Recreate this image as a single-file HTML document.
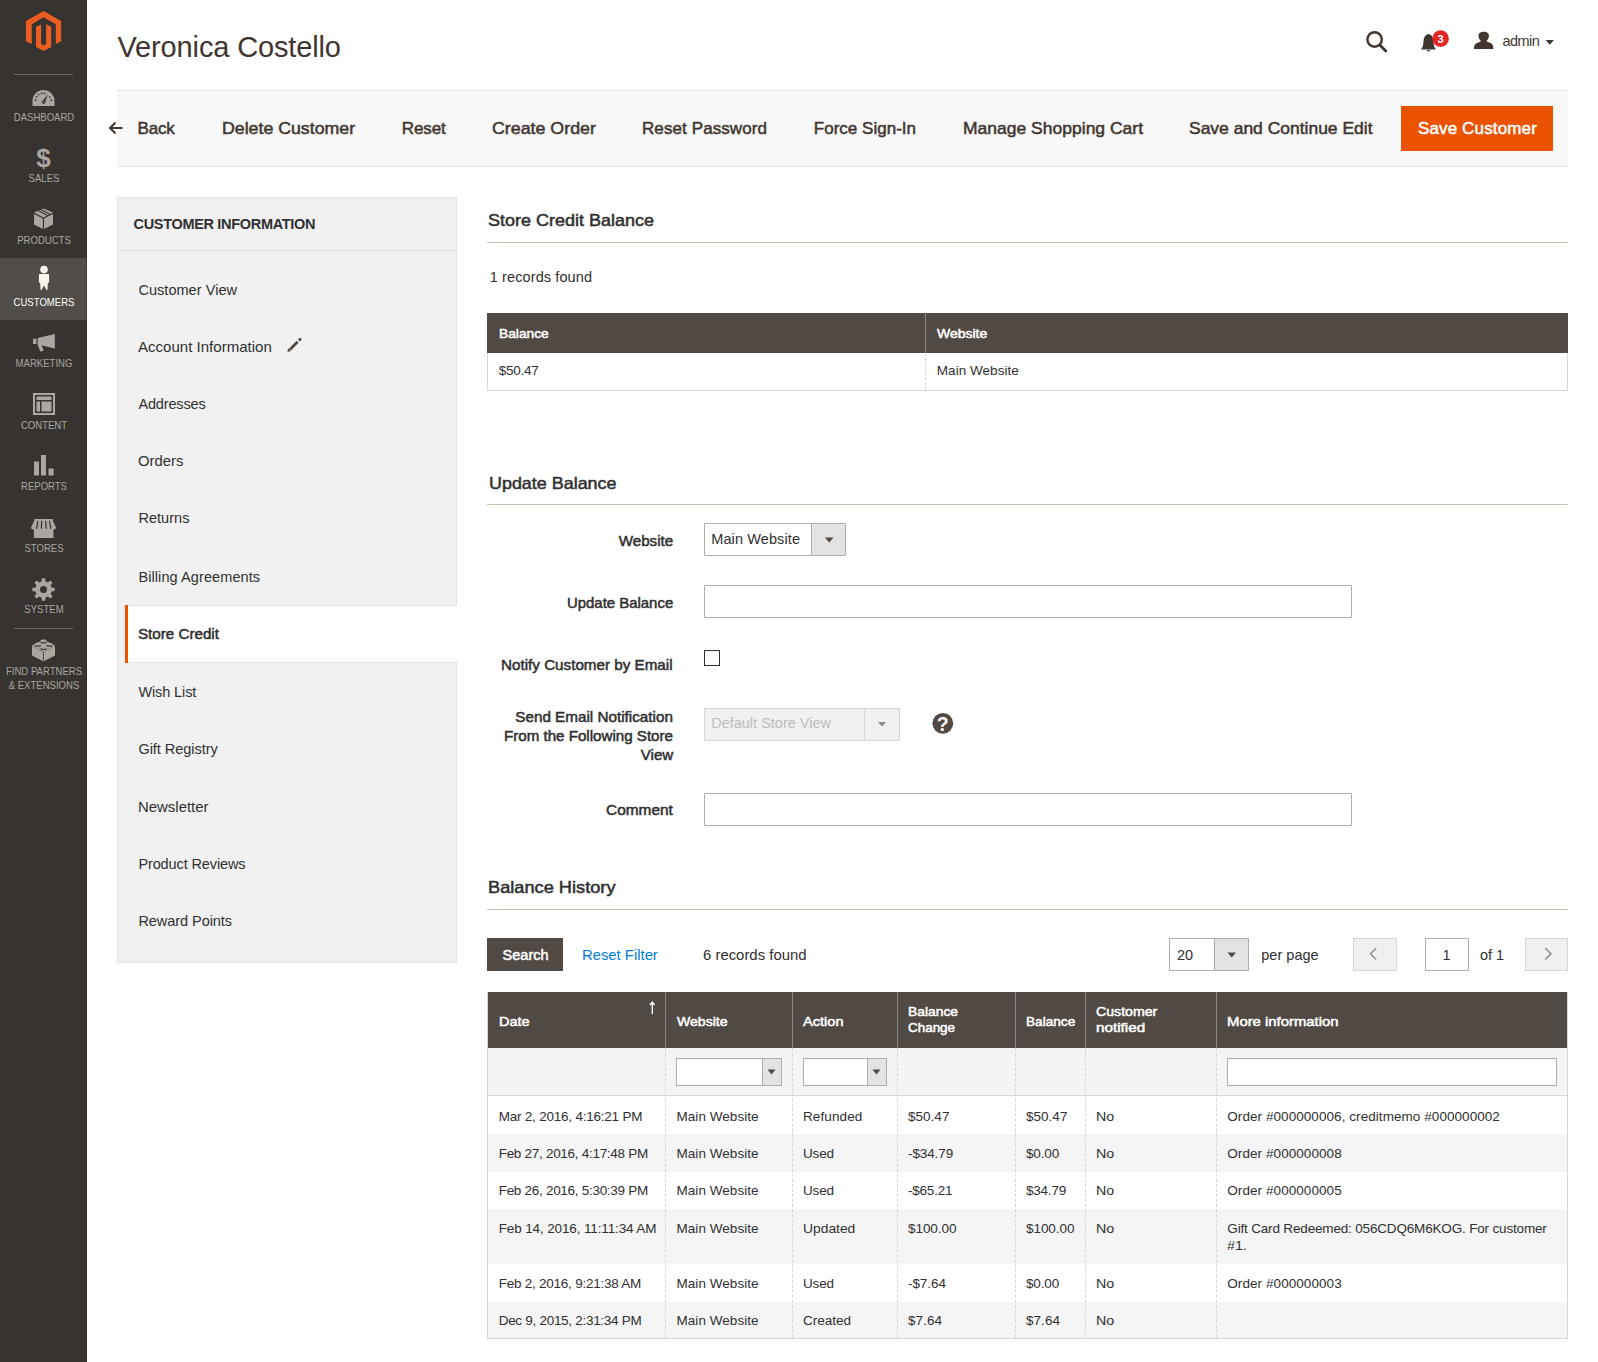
<!DOCTYPE html>
<html><head><meta charset="utf-8"><title>Veronica Costello / Customers</title>
<style>
html,body{margin:0;padding:0;}
body{width:1598px;height:1362px;position:relative;overflow:hidden;background:#fff;font-family:"Liberation Sans",sans-serif;}
.t{position:absolute;white-space:nowrap;}
.b{position:absolute;box-sizing:border-box;}
svg{position:absolute;overflow:visible;}
</style></head><body>
<!-- sidebar -->
<div class="b" style="left:0;top:0;width:87px;height:1362px;background:#373330;"></div>
<div class="b" style="left:0;top:258px;width:87px;height:62px;background:#524d49;"></div>
<div class="b" style="left:86px;top:0;width:1px;height:1362px;background:#2f2b28;opacity:.6"></div>
<svg style="left:0;top:0" width="87" height="60" viewBox="0 0 87 60">
<path fill="#eb5e22" d="M43.5 11 L61.1 21 L61.1 41.2 L55.8 44.1 L55.8 24.3 L43.5 17.3 L31.75 24.3 L31.75 43.9 L26 41.2 L26 21 Z"/>
<path fill="#eb5e22" d="M36 27 L41.1 24.3 L41.1 43.9 L43.5 45.2 L46.2 43.9 L46.2 24.1 L51.2 27 L51.2 47 L43.5 51.1 L36 47 Z"/>
</svg>
<div class="b" style="left:14px;top:74px;width:59px;height:1px;background:#736963;"></div>
<div class="b" style="left:14px;top:628px;width:59px;height:1px;background:#736963;"></div>
<!-- dashboard gauge -->
<svg style="left:0;top:0" width="87" height="720">
<path fill="#aaa6a0" d="M32.5 106 L32.5 101 A11 11 0 0 1 54.5 101 L54.5 106 Z"/>
<g fill="#373330"><circle cx="35.6" cy="100.2" r="0.85"/><circle cx="36.5" cy="96.9" r="0.85"/><circle cx="38.6" cy="94.5" r="0.85"/><circle cx="41.6" cy="93.4" r="0.85"/><circle cx="44.6" cy="93.4" r="0.85"/><circle cx="49.9" cy="97" r="0.85"/><circle cx="51.4" cy="100.2" r="0.85"/></g>
<path fill="#373330" d="M42.2 101.6 L47.9 94.2 L44.9 102.8 Z"/><circle cx="43.5" cy="102.2" r="1.7" fill="#373330"/><circle cx="43.5" cy="102.2" r="0.6" fill="#aaa6a0"/>
<!-- sales $ -->
<text x="43.5" y="167" font-family="Liberation Sans" font-weight="700" font-size="26" fill="#aaa6a0" text-anchor="middle">$</text>
<!-- products box -->
<path fill="#aaa6a0" d="M34 214 L42.9 218.6 L42.9 229 L34 224.4 Z M53 214 L44.1 218.6 L44.1 229 L53 224.4 Z M34 212.6 L43.5 208.4 L53 212.6 L43.5 217.4 Z"/>
<path stroke="#373330" stroke-width="1.1" fill="none" d="M38.2 210.6 L47.6 215.4 M40.8 209.4 L50.2 214.2"/>
<!-- customers person -->
<circle cx="44" cy="269.6" r="3.8" fill="#f7f3eb"/>
<path fill="#f7f3eb" d="M39.6 274 L48.4 274 Q49.1 274 49.1 274.8 L49.1 282.8 L47.9 282.8 L47.4 290 L46.5 290 L44 285.4 L41.5 290 L40.6 290 L40.1 282.8 L38.9 282.8 L38.9 274.8 Q38.9 274 39.6 274 Z"/>
<!-- marketing megaphone -->
<path fill="#aaa6a0" d="M33 338.8 L36.4 338.8 L36.4 344 L33 344 Z M37.6 338.1 L54.8 334 L54.8 348.6 L41.5 345.3 L43.8 350.5 L40.4 351.7 L37.6 344.5 Z"/>
<!-- content -->
<path fill="#aaa6a0" fill-rule="evenodd" d="M33 393 L55 393 L55 415 L33 415 Z M35 395 L35 413 L53 413 L53 395 Z"/>
<path fill="#aaa6a0" d="M36.5 396.5 L51.5 396.5 L51.5 400 L36.5 400 Z M36.5 401.5 L40 401.5 L40 411.5 L36.5 411.5 Z M41.5 401.5 L51.5 401.5 L51.5 411.5 L41.5 411.5 Z"/>
<!-- reports -->
<path fill="#aaa6a0" d="M34 461.5 L39 461.5 L39 475.4 L34 475.4 Z M41 455 L46 455 L46 475.4 L41 475.4 Z M48.5 468.5 L53.6 468.5 L53.6 475.4 L48.5 475.4 Z"/>
<!-- stores -->
<path fill="#aaa6a0" d="M34.3 519 L52.8 519 L53 521 L56 527.5 Q56 529.6 54 529.6 L53.5 529.6 L53.5 538 L33.9 538 L33.9 529.6 L33 529.6 Q31 529.6 31 527.5 L34.1 521 Z"/>
<path stroke="#373330" stroke-width="1.2" stroke-linecap="round" d="M37.8 521.3 L36.6 528.3 M41.7 521.3 L41.3 528.3 M45.7 521.3 L46.1 528.3 M49.6 521.3 L50.8 528.3"/>
<!-- system gear -->
<path fill="#aaa6a0" d="M41.49 581.45 L41.93 578.31 L45.07 578.31 L45.51 581.45 L47.77 582.39 L50.30 580.48 L52.52 582.70 L50.61 585.23 L51.55 587.49 L54.69 587.93 L54.69 591.07 L51.55 591.51 L50.61 593.77 L52.52 596.30 L50.30 598.52 L47.77 596.61 L45.51 597.55 L45.07 600.69 L41.93 600.69 L41.49 597.55 L39.23 596.61 L36.70 598.52 L34.48 596.30 L36.39 593.77 L35.45 591.51 L32.31 591.07 L32.31 587.93 L35.45 587.49 L36.39 585.23 L34.48 582.70 L36.70 580.48 L39.23 582.39 Z"/>
<circle cx="43.5" cy="589.5" r="3.5" fill="#373330"/>
<!-- extensions lego -->
<path fill="#aaa6a0" d="M32 645.5 L43.5 639.8 L55 645.5 L55 655.5 L43.5 661.5 L32 655.5 Z"/>
<path stroke="#373330" stroke-width="0.7" stroke-dasharray="0.8 0.8" fill="none" d="M32.6 646.3 L43.5 652 L54.4 646.3"/>
<path stroke="#373330" stroke-width="0.8" fill="none" d="M43.5 652.3 L43.5 661"/>
<g fill="#373330"><ellipse cx="43.5" cy="641.9" rx="3.1" ry="1.5"/><ellipse cx="37.9" cy="645.2" rx="3.1" ry="1.5"/><ellipse cx="49.3" cy="645.2" rx="3.1" ry="1.5"/><ellipse cx="43.5" cy="648.5" rx="3.1" ry="1.5"/></g>
<g fill="#aaa6a0"><ellipse cx="43.5" cy="640.9" rx="3.1" ry="1.4"/><ellipse cx="37.9" cy="644.2" rx="3.1" ry="1.4"/><ellipse cx="49.3" cy="644.2" rx="3.1" ry="1.4"/><ellipse cx="43.5" cy="647.5" rx="3.1" ry="1.4"/></g>
</svg>

<!-- header icons -->
<svg style="left:0;top:0" width="1598" height="60">
<circle cx="1374.6" cy="39.5" r="7.2" fill="none" stroke="#41362f" stroke-width="2.4"/>
<path d="M1379.8 45 L1385.8 51" stroke="#41362f" stroke-width="2.8" stroke-linecap="round"/>
<path fill="#41362f" d="M1421 49.5 C1423 47 1423.3 45 1423.5 41 C1423.7 37 1425.5 34.5 1428.5 34 C1431.5 34.5 1433.3 37 1433.5 41 C1433.7 45 1434 47 1436 49.5 Z"/>
<path fill="#41362f" d="M1426.5 50 L1430.5 50 L1428.5 51.8 Z"/>
<circle cx="1440.6" cy="38.6" r="8.3" fill="#e22626"/>
<text x="1440.6" y="42.6" font-family="Liberation Sans" font-weight="700" font-size="11" fill="#fff" text-anchor="middle">3</text>
<path fill="#41362f" d="M1474 49 C1474 44.5 1475.5 43 1479.5 42 L1481 41 C1479 39.5 1478.5 37 1478.5 35.5 C1478.5 32.8 1480.8 31.7 1483.7 31.7 C1486.6 31.7 1488.9 32.8 1488.9 35.5 C1488.9 37 1488.4 39.5 1486.4 41 L1488 42 C1492 43 1493.4 44.5 1493.4 49 Z"/>
<path fill="#41362f" d="M1545.7 40 L1553.9 40 L1549.8 44.8 Z"/>
</svg>

<!-- toolbar -->
<div class="b" style="left:117px;top:90px;width:1451px;height:77px;background:#f8f8f8;border-top:1px solid #e3e3e3;border-bottom:1px solid #e3e3e3;"></div>
<svg style="left:0;top:0" width="200" height="200">
<path d="M110 128 L122.5 128 M115.5 122.5 L110 128 L115.5 133.5" stroke="#41362f" stroke-width="2" fill="none"/>
</svg>
<div class="b" style="left:1401px;top:106px;width:152px;height:45px;background:#eb5202;"></div>

<!-- left panel -->
<div class="b" style="left:117px;top:197px;width:340px;height:766px;background:#f1f1f1;border:1px solid #e3e3e3;"></div>
<div class="b" style="left:118px;top:250px;width:338px;height:1px;background:#e3e3e3;"></div>
<div class="b" style="left:125px;top:605px;width:332px;height:58px;background:#fff;border-top:1px solid #e3e3e3;border-bottom:1px solid #e3e3e3;"></div>
<div class="b" style="left:125px;top:605px;width:3px;height:58px;background:#eb5202;"></div>
<svg style="left:0;top:0" width="400" height="400">
<path d="M290 349.4 L297.6 341.8" stroke="#514943" stroke-width="2.8"/>
<path d="M298.9 340.5 L300.9 338.5" stroke="#514943" stroke-width="2.8"/>
<path fill="#514943" d="M287.4 351.9 L288.3 348.3 L291.1 351 Z"/>
</svg>

<!-- main: store credit balance -->
<div class="b" style="left:487px;top:242px;width:1081px;height:1px;background:#cac3b4;"></div>
<div class="b" style="left:487px;top:313px;width:1081px;height:78px;border:1px solid #d6d6d6;border-top:0;background:#fff;"></div>
<div class="b" style="left:487px;top:313px;width:1081px;height:40px;background:#514943;"></div>
<div class="b" style="left:925px;top:313px;width:1px;height:40px;background:#8a837f;"></div>
<div class="b" style="left:925px;top:353px;width:0;height:37px;border-left:1px dashed #d6d6d6;"></div>

<!-- update balance -->
<div class="b" style="left:487px;top:504px;width:1081px;height:1px;background:#cac3b4;"></div>
<div class="b" style="left:704px;top:523px;width:142px;height:33px;border:1px solid #adadad;background:#fff;border-radius:1px;"></div>
<div class="b" style="left:811px;top:524px;width:34px;height:31px;background:#e3e3e3;border-left:1px solid #adadad;"></div>
<div class="b" style="left:704px;top:585px;width:648px;height:33px;border:1px solid #adadad;background:#fff;border-radius:1px;"></div>
<div class="b" style="left:704px;top:650px;width:16px;height:16px;border:1px solid #303030;background:#fff;"></div>
<div class="b" style="left:704px;top:708px;width:196px;height:33px;border:1px solid #d6d6d6;background:#f0f0f0;"></div>
<div class="b" style="left:864px;top:709px;width:1px;height:31px;background:#d6d6d6;"></div>
<div class="b" style="left:704px;top:793px;width:648px;height:33px;border:1px solid #adadad;background:#fff;border-radius:1px;"></div>

<svg style="left:0;top:0" width="1598" height="900">
<path fill="#514943" d="M825 537.5 L833.5 537.5 L829.25 542.5 Z"/>
<path fill="#8a8a8a" d="M878 722 L886 722 L882 726.5 Z"/>
<circle cx="942.8" cy="723.3" r="10.4" fill="#514943"/>
<text x="942.8" y="730.6" font-family="Liberation Sans" font-weight="700" font-size="19.5" fill="#fff" text-anchor="middle">?</text>
</svg>
<!-- balance history -->
<div class="b" style="left:487px;top:909px;width:1081px;height:1px;background:#cac3b4;"></div>
<div class="b" style="left:487px;top:938px;width:76px;height:33px;background:#514943;"></div>
<div class="b" style="left:1169px;top:938px;width:80px;height:33px;border:1px solid #adadad;background:#fff;"></div>
<div class="b" style="left:1214px;top:939px;width:34px;height:31px;background:#e3e3e3;border-left:1px solid #adadad;"></div>
<div class="b" style="left:1353px;top:938px;width:44px;height:33px;border:1px solid #d6d6d6;background:#f0f0f0;"></div>
<div class="b" style="left:1425px;top:938px;width:44px;height:33px;border:1px solid #adadad;background:#fff;"></div>
<div class="b" style="left:1525px;top:938px;width:43px;height:33px;border:1px solid #d6d6d6;background:#f0f0f0;"></div>
<svg style="left:0;top:0" width="1598" height="1362">
<path fill="#514943" d="M1227.5 952.5 L1236 952.5 L1231.75 957.5 Z"/>
<path d="M1376.2 948.3 L1370.5 953.8 L1376.2 959.4" stroke="#8f8782" stroke-width="1.4" fill="none"/>
<path d="M1545.3 948.3 L1551 953.8 L1545.3 959.4" stroke="#8f8782" stroke-width="1.4" fill="none"/>
</svg>

<!-- grid -->

<div class="b" style="left:487px;top:992px;width:1081px;height:56px;background:#514943;"></div>
<div class="b" style="left:488px;top:1048px;width:1079px;height:48px;background:#f4f4f4;border-bottom:1px solid #d6d6d6;"></div>
<div class="b" style="left:488px;top:1134px;width:1079px;height:37.5px;background:#f5f5f5;"></div>
<div class="b" style="left:488px;top:1209px;width:1079px;height:55px;background:#f5f5f5;"></div>
<div class="b" style="left:488px;top:1301.5px;width:1079px;height:37px;background:#f5f5f5;"></div>
<div class="b" style="left:487px;top:992px;width:1081px;height:347px;border:1px solid #d6d6d6;border-top:0;"></div>
<!-- header col borders -->
<div class="b" style="left:665px;top:992px;width:1px;height:56px;background:#8a837f;"></div>
<div class="b" style="left:792px;top:992px;width:1px;height:56px;background:#8a837f;"></div>
<div class="b" style="left:897px;top:992px;width:1px;height:56px;background:#8a837f;"></div>
<div class="b" style="left:1015px;top:992px;width:1px;height:56px;background:#8a837f;"></div>
<div class="b" style="left:1085px;top:992px;width:1px;height:56px;background:#8a837f;"></div>
<div class="b" style="left:1216px;top:992px;width:1px;height:56px;background:#8a837f;"></div>
<!-- body col borders dashed -->
<div class="b" style="left:665px;top:1048px;width:0;height:290px;border-left:1px dashed #d6d6d6;"></div>
<div class="b" style="left:792px;top:1048px;width:0;height:290px;border-left:1px dashed #d6d6d6;"></div>
<div class="b" style="left:897px;top:1048px;width:0;height:290px;border-left:1px dashed #d6d6d6;"></div>
<div class="b" style="left:1015px;top:1048px;width:0;height:290px;border-left:1px dashed #d6d6d6;"></div>
<div class="b" style="left:1085px;top:1048px;width:0;height:290px;border-left:1px dashed #d6d6d6;"></div>
<div class="b" style="left:1216px;top:1048px;width:0;height:290px;border-left:1px dashed #d6d6d6;"></div>
<!-- filters -->
<div class="b" style="left:676px;top:1058px;width:106px;height:28px;border:1px solid #adadad;background:#fff;"></div>
<div class="b" style="left:762px;top:1059px;width:19px;height:26px;background:#e3e3e3;border-left:1px solid #adadad;"></div>
<div class="b" style="left:803px;top:1058px;width:84px;height:28px;border:1px solid #adadad;background:#fff;"></div>
<div class="b" style="left:867px;top:1059px;width:19px;height:26px;background:#e3e3e3;border-left:1px solid #adadad;"></div>
<div class="b" style="left:1227px;top:1058px;width:330px;height:28px;border:1px solid #adadad;background:#fff;"></div>
<svg style="left:0;top:0" width="1598" height="1362">
<path fill="#514943" d="M767.5 1069.5 L775.5 1069.5 L771.5 1074.5 Z"/>
<path fill="#514943" d="M872.5 1069.5 L880.5 1069.5 L876.5 1074.5 Z"/>
<path d="M652.3 1002.5 L652.3 1014 M650 1005 L652.3 1002 L654.6 1005" stroke="#fff" stroke-width="1.3" fill="none"/>
</svg>

<span class="t" id="t0" style="top:112.26px;font-size:11.5px;line-height:11.5px;font-weight:400;color:#aaa6a0;transform:scaleX(0.83);transform-origin:50% 50%;left:-106.50px;width:300px;text-align:center;">DASHBOARD</span>
<span class="t" id="t1" style="top:173.26px;font-size:11.5px;line-height:11.5px;font-weight:400;color:#aaa6a0;transform:scaleX(0.83);transform-origin:50% 50%;left:-106.50px;width:300px;text-align:center;">SALES</span>
<span class="t" id="t2" style="top:235.26px;font-size:11.5px;line-height:11.5px;font-weight:400;color:#aaa6a0;transform:scaleX(0.83);transform-origin:50% 50%;left:-106.50px;width:300px;text-align:center;">PRODUCTS</span>
<span class="t" id="t3" style="top:297.26px;font-size:11.5px;line-height:11.5px;font-weight:400;color:#ffffff;transform:scaleX(0.83);transform-origin:50% 50%;left:-106.50px;width:300px;text-align:center;">CUSTOMERS</span>
<span class="t" id="t4" style="top:358.26px;font-size:11.5px;line-height:11.5px;font-weight:400;color:#aaa6a0;transform:scaleX(0.83);transform-origin:50% 50%;left:-106.50px;width:300px;text-align:center;">MARKETING</span>
<span class="t" id="t5" style="top:419.96px;font-size:11.5px;line-height:11.5px;font-weight:400;color:#aaa6a0;transform:scaleX(0.83);transform-origin:50% 50%;left:-106.50px;width:300px;text-align:center;">CONTENT</span>
<span class="t" id="t6" style="top:481.26px;font-size:11.5px;line-height:11.5px;font-weight:400;color:#aaa6a0;transform:scaleX(0.83);transform-origin:50% 50%;left:-106.50px;width:300px;text-align:center;">REPORTS</span>
<span class="t" id="t7" style="top:542.96px;font-size:11.5px;line-height:11.5px;font-weight:400;color:#aaa6a0;transform:scaleX(0.83);transform-origin:50% 50%;left:-106.50px;width:300px;text-align:center;">STORES</span>
<span class="t" id="t8" style="top:604.26px;font-size:11.5px;line-height:11.5px;font-weight:400;color:#aaa6a0;transform:scaleX(0.83);transform-origin:50% 50%;left:-106.50px;width:300px;text-align:center;">SYSTEM</span>
<span class="t" id="t9" style="top:665.86px;font-size:11.5px;line-height:11.5px;font-weight:400;color:#aaa6a0;transform:scaleX(0.83);transform-origin:50% 50%;left:-106.50px;width:300px;text-align:center;">FIND PARTNERS</span>
<span class="t" id="t10" style="top:679.86px;font-size:11.5px;line-height:11.5px;font-weight:400;color:#aaa6a0;transform:scaleX(0.83);transform-origin:50% 50%;left:-106.50px;width:300px;text-align:center;">&amp; EXTENSIONS</span>
<span class="t" id="t11" style="top:33.15px;font-size:29px;line-height:29px;font-weight:400;color:#41362f;letter-spacing:-0.137px;left:117.50px;">Veronica Costello</span>
<span class="t" id="t12" style="top:33.62px;font-size:14.5px;line-height:14.5px;font-weight:400;color:#41362f;letter-spacing:-0.575px;left:1502.60px;">admin</span>
<span class="t" id="t13" style="top:119.61px;font-size:17px;line-height:17px;font-weight:400;color:#41362f;-webkit-text-stroke:0.5px #41362f;letter-spacing:-0.199px;left:137.60px;">Back</span>
<span class="t" id="t14" style="top:119.61px;font-size:17px;line-height:17px;font-weight:400;color:#41362f;-webkit-text-stroke:0.5px #41362f;transform:scaleX(1.0430);transform-origin:0 50%;left:222.00px;">Delete Customer</span>
<span class="t" id="t15" style="top:119.61px;font-size:17px;line-height:17px;font-weight:400;color:#41362f;-webkit-text-stroke:0.5px #41362f;letter-spacing:-0.080px;left:401.70px;">Reset</span>
<span class="t" id="t16" style="top:119.61px;font-size:17px;line-height:17px;font-weight:400;color:#41362f;-webkit-text-stroke:0.5px #41362f;transform:scaleX(1.0468);transform-origin:0 50%;left:492.00px;">Create Order</span>
<span class="t" id="t17" style="top:119.61px;font-size:17px;line-height:17px;font-weight:400;color:#41362f;-webkit-text-stroke:0.5px #41362f;letter-spacing:0.094px;left:642.00px;">Reset Password</span>
<span class="t" id="t18" style="top:119.61px;font-size:17px;line-height:17px;font-weight:400;color:#41362f;-webkit-text-stroke:0.5px #41362f;letter-spacing:0.013px;left:813.80px;">Force Sign-In</span>
<span class="t" id="t19" style="top:119.61px;font-size:17px;line-height:17px;font-weight:400;color:#41362f;-webkit-text-stroke:0.5px #41362f;transform:scaleX(1.0297);transform-origin:0 50%;left:962.50px;">Manage Shopping Cart</span>
<span class="t" id="t20" style="top:119.61px;font-size:17px;line-height:17px;font-weight:400;color:#41362f;-webkit-text-stroke:0.5px #41362f;transform:scaleX(1.0274);transform-origin:0 50%;left:1188.50px;">Save and Continue Edit</span>
<span class="t" id="t21" style="top:119.61px;font-size:17px;line-height:17px;font-weight:400;color:#ffffff;-webkit-text-stroke:0.5px #ffffff;letter-spacing:0.152px;left:1417.90px;">Save Customer</span>
<span class="t" id="t22" style="top:216.62px;font-size:14.5px;line-height:14.5px;font-weight:700;color:#303030;letter-spacing:-0.319px;left:133.50px;">CUSTOMER INFORMATION</span>
<span class="t" id="t23" style="top:282.72px;font-size:14.5px;line-height:14.5px;font-weight:400;color:#303030;letter-spacing:0.046px;left:138.40px;">Customer View</span>
<span class="t" id="t24" style="top:339.72px;font-size:14.5px;line-height:14.5px;font-weight:400;color:#303030;transform:scaleX(1.0378);transform-origin:0 50%;left:138.40px;">Account Information</span>
<span class="t" id="t25" style="top:396.52px;font-size:14.5px;line-height:14.5px;font-weight:400;color:#303030;letter-spacing:-0.152px;left:138.40px;">Addresses</span>
<span class="t" id="t26" style="top:454.32px;font-size:14.5px;line-height:14.5px;font-weight:400;color:#303030;transform:scaleX(1.0247);transform-origin:0 50%;left:138.40px;">Orders</span>
<span class="t" id="t27" style="top:511.02px;font-size:14.5px;line-height:14.5px;font-weight:400;color:#303030;letter-spacing:0.053px;left:138.40px;">Returns</span>
<span class="t" id="t28" style="top:569.62px;font-size:14.5px;line-height:14.5px;font-weight:400;color:#303030;letter-spacing:0.094px;left:138.40px;">Billing Agreements</span>
<span class="t" id="t29" style="top:626.92px;font-size:14.5px;line-height:14.5px;font-weight:400;color:#303030;-webkit-text-stroke:0.5px #303030;transform:scaleX(1.0462);transform-origin:0 50%;left:138.40px;">Store Credit</span>
<span class="t" id="t30" style="top:684.92px;font-size:14.5px;line-height:14.5px;font-weight:400;color:#303030;letter-spacing:-0.104px;left:138.40px;">Wish List</span>
<span class="t" id="t31" style="top:741.62px;font-size:14.5px;line-height:14.5px;font-weight:400;color:#303030;letter-spacing:-0.039px;left:138.40px;">Gift Registry</span>
<span class="t" id="t32" style="top:799.52px;font-size:14.5px;line-height:14.5px;font-weight:400;color:#303030;transform:scaleX(1.0296);transform-origin:0 50%;left:138.40px;">Newsletter</span>
<span class="t" id="t33" style="top:856.62px;font-size:14.5px;line-height:14.5px;font-weight:400;color:#303030;letter-spacing:-0.114px;left:138.40px;">Product Reviews</span>
<span class="t" id="t34" style="top:913.52px;font-size:14.5px;line-height:14.5px;font-weight:400;color:#303030;letter-spacing:-0.050px;left:138.40px;">Reward Points</span>
<span class="t" id="t35" style="top:212.13px;font-size:16.5px;line-height:16.5px;font-weight:400;color:#303030;-webkit-text-stroke:0.5px #303030;transform:scaleX(1.0902);transform-origin:0 50%;left:487.80px;">Store Credit Balance</span>
<span class="t" id="t36" style="top:269.72px;font-size:14.5px;line-height:14.5px;font-weight:400;color:#303030;letter-spacing:0.102px;left:489.80px;">1 records found</span>
<span class="t" id="t37" style="top:326.99px;font-size:13px;line-height:13px;font-weight:400;color:#ffffff;-webkit-text-stroke:0.5px #ffffff;transform:scaleX(1.0591);transform-origin:0 50%;left:498.80px;">Balance</span>
<span class="t" id="t38" style="top:326.99px;font-size:13px;line-height:13px;font-weight:400;color:#ffffff;-webkit-text-stroke:0.5px #ffffff;transform:scaleX(1.0758);transform-origin:0 50%;left:936.80px;">Website</span>
<span class="t" id="t39" style="top:364.37px;font-size:13.5px;line-height:13.5px;font-weight:400;color:#303030;letter-spacing:-0.259px;left:498.80px;">$50.47</span>
<span class="t" id="t40" style="top:364.37px;font-size:13.5px;line-height:13.5px;font-weight:400;color:#303030;letter-spacing:0.041px;left:936.80px;">Main Website</span>
<span class="t" id="t41" style="top:475.03px;font-size:16.5px;line-height:16.5px;font-weight:400;color:#303030;-webkit-text-stroke:0.5px #303030;transform:scaleX(1.0857);transform-origin:0 50%;left:488.50px;">Update Balance</span>
<span class="t" id="t42" style="top:534.32px;font-size:14.5px;line-height:14.5px;font-weight:400;color:#303030;-webkit-text-stroke:0.5px #303030;transform:scaleX(1.0425);transform-origin:100% 50%;right:925.00px;text-align:right;">Website</span>
<span class="t" id="t43" style="top:596.22px;font-size:14.5px;line-height:14.5px;font-weight:400;color:#303030;-webkit-text-stroke:0.5px #303030;transform:scaleX(1.0295);transform-origin:100% 50%;right:925.00px;text-align:right;">Update Balance</span>
<span class="t" id="t44" style="top:657.82px;font-size:14.5px;line-height:14.5px;font-weight:400;color:#303030;-webkit-text-stroke:0.5px #303030;transform:scaleX(1.0487);transform-origin:100% 50%;right:925.00px;text-align:right;">Notify Customer by Email</span>
<span class="t" id="t45" style="top:710.02px;font-size:14.5px;line-height:14.5px;font-weight:400;color:#303030;-webkit-text-stroke:0.5px #303030;transform:scaleX(1.0516);transform-origin:100% 50%;right:925.00px;text-align:right;">Send Email Notification</span>
<span class="t" id="t46" style="top:729.02px;font-size:14.5px;line-height:14.5px;font-weight:400;color:#303030;-webkit-text-stroke:0.5px #303030;transform:scaleX(1.0436);transform-origin:100% 50%;right:925.00px;text-align:right;">From the Following Store</span>
<span class="t" id="t47" style="top:747.82px;font-size:14.5px;line-height:14.5px;font-weight:400;color:#303030;-webkit-text-stroke:0.5px #303030;transform:scaleX(1.0374);transform-origin:100% 50%;right:925.00px;text-align:right;">View</span>
<span class="t" id="t48" style="top:802.72px;font-size:14.5px;line-height:14.5px;font-weight:400;color:#303030;-webkit-text-stroke:0.5px #303030;transform:scaleX(1.0637);transform-origin:100% 50%;right:925.00px;text-align:right;">Comment</span>
<span class="t" id="t49" style="top:532.42px;font-size:14.5px;line-height:14.5px;font-weight:400;color:#303030;letter-spacing:0.111px;left:711.20px;">Main Website</span>
<span class="t" id="t50" style="top:716.22px;font-size:14.5px;line-height:14.5px;font-weight:400;color:#bdbdbd;letter-spacing:-0.002px;left:711.20px;">Default Store View</span>
<span class="t" id="t51" style="top:879.43px;font-size:16.5px;line-height:16.5px;font-weight:400;color:#303030;-webkit-text-stroke:0.5px #303030;transform:scaleX(1.1033);transform-origin:0 50%;left:488.30px;">Balance History</span>
<span class="t" id="t52" style="top:947.92px;font-size:14.5px;line-height:14.5px;font-weight:400;color:#ffffff;-webkit-text-stroke:0.5px #ffffff;letter-spacing:0.029px;left:502.50px;">Search</span>
<span class="t" id="t53" style="top:947.92px;font-size:14.5px;line-height:14.5px;font-weight:400;color:#007bdb;transform:scaleX(1.0227);transform-origin:0 50%;left:582.00px;">Reset Filter</span>
<span class="t" id="t54" style="top:947.92px;font-size:14.5px;line-height:14.5px;font-weight:400;color:#303030;transform:scaleX(1.0274);transform-origin:0 50%;left:703.00px;">6 records found</span>
<span class="t" id="t55" style="top:947.92px;font-size:14.5px;line-height:14.5px;font-weight:400;color:#303030;left:1177.00px;">20</span>
<span class="t" id="t56" style="top:947.92px;font-size:14.5px;line-height:14.5px;font-weight:400;color:#303030;letter-spacing:0.036px;left:1261.20px;">per page</span>
<span class="t" id="t57" style="top:947.92px;font-size:14.5px;line-height:14.5px;font-weight:400;color:#303030;left:1296.50px;width:300px;text-align:center;">1</span>
<span class="t" id="t58" style="top:947.92px;font-size:14.5px;line-height:14.5px;font-weight:400;color:#303030;letter-spacing:-0.062px;left:1480.00px;">of 1</span>
<span class="t" id="t59" style="top:1014.59px;font-size:13px;line-height:13px;font-weight:400;color:#ffffff;-webkit-text-stroke:0.5px #ffffff;transform:scaleX(1.1145);transform-origin:0 50%;left:498.50px;">Date</span>
<span class="t" id="t60" style="top:1014.59px;font-size:13px;line-height:13px;font-weight:400;color:#ffffff;-webkit-text-stroke:0.5px #ffffff;transform:scaleX(1.0823);transform-origin:0 50%;left:676.50px;">Website</span>
<span class="t" id="t61" style="top:1014.59px;font-size:13px;line-height:13px;font-weight:400;color:#ffffff;-webkit-text-stroke:0.5px #ffffff;transform:scaleX(1.1241);transform-origin:0 50%;left:803.00px;">Action</span>
<span class="t" id="t62" style="top:1014.59px;font-size:13px;line-height:13px;font-weight:400;color:#ffffff;-webkit-text-stroke:0.5px #ffffff;transform:scaleX(1.0482);transform-origin:0 50%;left:1026.00px;">Balance</span>
<span class="t" id="t63" style="top:1014.59px;font-size:13px;line-height:13px;font-weight:400;color:#ffffff;-webkit-text-stroke:0.5px #ffffff;transform:scaleX(1.1435);transform-origin:0 50%;left:1227.30px;">More information</span>
<span class="t" id="t64" style="top:1004.79px;font-size:13px;line-height:13px;font-weight:400;color:#ffffff;-webkit-text-stroke:0.5px #ffffff;transform:scaleX(1.0656);transform-origin:0 50%;left:908.00px;">Balance</span>
<span class="t" id="t65" style="top:1021.49px;font-size:13px;line-height:13px;font-weight:400;color:#ffffff;-webkit-text-stroke:0.5px #ffffff;transform:scaleX(1.0326);transform-origin:0 50%;left:908.00px;">Change</span>
<span class="t" id="t66" style="top:1004.79px;font-size:13px;line-height:13px;font-weight:400;color:#ffffff;-webkit-text-stroke:0.5px #ffffff;transform:scaleX(1.0874);transform-origin:0 50%;left:1096.00px;">Customer</span>
<span class="t" id="t67" style="top:1021.49px;font-size:13px;line-height:13px;font-weight:400;color:#ffffff;-webkit-text-stroke:0.5px #ffffff;transform:scaleX(1.1730);transform-origin:0 50%;left:1096.00px;">notified</span>
<span class="t" id="t68" style="top:1109.57px;font-size:13.5px;line-height:13.5px;font-weight:400;color:#303030;letter-spacing:-0.218px;left:498.70px;">Mar 2, 2016, 4:16:21 PM</span>
<span class="t" id="t69" style="top:1109.57px;font-size:13.5px;line-height:13.5px;font-weight:400;color:#303030;letter-spacing:0.050px;left:676.50px;">Main Website</span>
<span class="t" id="t70" style="top:1109.57px;font-size:13.5px;line-height:13.5px;font-weight:400;color:#303030;letter-spacing:0.105px;left:803.00px;">Refunded</span>
<span class="t" id="t71" style="top:1109.57px;font-size:13.5px;line-height:13.5px;font-weight:400;color:#303030;letter-spacing:0.021px;left:908.00px;">$50.47</span>
<span class="t" id="t72" style="top:1109.57px;font-size:13.5px;line-height:13.5px;font-weight:400;color:#303030;letter-spacing:0.021px;left:1026.00px;">$50.47</span>
<span class="t" id="t73" style="top:1109.57px;font-size:13.5px;line-height:13.5px;font-weight:400;color:#303030;transform:scaleX(1.0574);transform-origin:0 50%;left:1096.00px;">No</span>
<span class="t" id="t74" style="top:1109.57px;font-size:13.5px;line-height:13.5px;font-weight:400;color:#303030;letter-spacing:0.063px;left:1227.30px;">Order #000000006, creditmemo #000000002</span>
<span class="t" id="t75" style="top:1146.57px;font-size:13.5px;line-height:13.5px;font-weight:400;color:#303030;letter-spacing:-0.287px;left:498.70px;">Feb 27, 2016, 4:17:48 PM</span>
<span class="t" id="t76" style="top:1146.57px;font-size:13.5px;line-height:13.5px;font-weight:400;color:#303030;letter-spacing:0.050px;left:676.50px;">Main Website</span>
<span class="t" id="t77" style="top:1146.57px;font-size:13.5px;line-height:13.5px;font-weight:400;color:#303030;letter-spacing:-0.172px;left:803.00px;">Used</span>
<span class="t" id="t78" style="top:1146.57px;font-size:13.5px;line-height:13.5px;font-weight:400;color:#303030;letter-spacing:-0.099px;left:908.00px;">-$34.79</span>
<span class="t" id="t79" style="top:1146.57px;font-size:13.5px;line-height:13.5px;font-weight:400;color:#303030;letter-spacing:-0.149px;left:1026.00px;">$0.00</span>
<span class="t" id="t80" style="top:1146.57px;font-size:13.5px;line-height:13.5px;font-weight:400;color:#303030;transform:scaleX(1.0574);transform-origin:0 50%;left:1096.00px;">No</span>
<span class="t" id="t81" style="top:1146.57px;font-size:13.5px;line-height:13.5px;font-weight:400;color:#303030;letter-spacing:0.070px;left:1227.30px;">Order #000000008</span>
<span class="t" id="t82" style="top:1184.07px;font-size:13.5px;line-height:13.5px;font-weight:400;color:#303030;letter-spacing:-0.287px;left:498.70px;">Feb 26, 2016, 5:30:39 PM</span>
<span class="t" id="t83" style="top:1184.07px;font-size:13.5px;line-height:13.5px;font-weight:400;color:#303030;letter-spacing:0.050px;left:676.50px;">Main Website</span>
<span class="t" id="t84" style="top:1184.07px;font-size:13.5px;line-height:13.5px;font-weight:400;color:#303030;letter-spacing:-0.172px;left:803.00px;">Used</span>
<span class="t" id="t85" style="top:1184.07px;font-size:13.5px;line-height:13.5px;font-weight:400;color:#303030;letter-spacing:-0.216px;left:908.00px;">-$65.21</span>
<span class="t" id="t86" style="top:1184.07px;font-size:13.5px;line-height:13.5px;font-weight:400;color:#303030;letter-spacing:-0.219px;left:1026.00px;">$34.79</span>
<span class="t" id="t87" style="top:1184.07px;font-size:13.5px;line-height:13.5px;font-weight:400;color:#303030;transform:scaleX(1.0574);transform-origin:0 50%;left:1096.00px;">No</span>
<span class="t" id="t88" style="top:1184.07px;font-size:13.5px;line-height:13.5px;font-weight:400;color:#303030;letter-spacing:0.070px;left:1227.30px;">Order #000000005</span>
<span class="t" id="t89" style="top:1221.57px;font-size:13.5px;line-height:13.5px;font-weight:400;color:#303030;letter-spacing:-0.132px;left:498.70px;">Feb 14, 2016, 11:11:34 AM</span>
<span class="t" id="t90" style="top:1221.57px;font-size:13.5px;line-height:13.5px;font-weight:400;color:#303030;letter-spacing:0.050px;left:676.50px;">Main Website</span>
<span class="t" id="t91" style="top:1221.57px;font-size:13.5px;line-height:13.5px;font-weight:400;color:#303030;transform:scaleX(1.0250);transform-origin:0 50%;left:803.00px;">Updated</span>
<span class="t" id="t92" style="top:1221.57px;font-size:13.5px;line-height:13.5px;font-weight:400;color:#303030;letter-spacing:-0.069px;left:908.00px;">$100.00</span>
<span class="t" id="t93" style="top:1221.57px;font-size:13.5px;line-height:13.5px;font-weight:400;color:#303030;letter-spacing:-0.069px;left:1026.00px;">$100.00</span>
<span class="t" id="t94" style="top:1221.57px;font-size:13.5px;line-height:13.5px;font-weight:400;color:#303030;transform:scaleX(1.0574);transform-origin:0 50%;left:1096.00px;">No</span>
<span class="t" id="t95" style="top:1221.57px;font-size:13.5px;line-height:13.5px;font-weight:400;color:#303030;letter-spacing:-0.169px;left:1227.30px;">Gift Card Redeemed: 056CDQ6M6KOG. For customer</span>
<span class="t" id="t96" style="top:1276.57px;font-size:13.5px;line-height:13.5px;font-weight:400;color:#303030;letter-spacing:-0.239px;left:498.70px;">Feb 2, 2016, 9:21:38 AM</span>
<span class="t" id="t97" style="top:1276.57px;font-size:13.5px;line-height:13.5px;font-weight:400;color:#303030;letter-spacing:0.050px;left:676.50px;">Main Website</span>
<span class="t" id="t98" style="top:1276.57px;font-size:13.5px;line-height:13.5px;font-weight:400;color:#303030;letter-spacing:-0.172px;left:803.00px;">Used</span>
<span class="t" id="t99" style="top:1276.57px;font-size:13.5px;line-height:13.5px;font-weight:400;color:#303030;letter-spacing:-0.076px;left:908.00px;">-$7.64</span>
<span class="t" id="t100" style="top:1276.57px;font-size:13.5px;line-height:13.5px;font-weight:400;color:#303030;letter-spacing:-0.149px;left:1026.00px;">$0.00</span>
<span class="t" id="t101" style="top:1276.57px;font-size:13.5px;line-height:13.5px;font-weight:400;color:#303030;transform:scaleX(1.0574);transform-origin:0 50%;left:1096.00px;">No</span>
<span class="t" id="t102" style="top:1276.57px;font-size:13.5px;line-height:13.5px;font-weight:400;color:#303030;letter-spacing:0.070px;left:1227.30px;">Order #000000003</span>
<span class="t" id="t103" style="top:1314.07px;font-size:13.5px;line-height:13.5px;font-weight:400;color:#303030;letter-spacing:-0.288px;left:498.70px;">Dec 9, 2015, 2:31:34 PM</span>
<span class="t" id="t104" style="top:1314.07px;font-size:13.5px;line-height:13.5px;font-weight:400;color:#303030;letter-spacing:0.050px;left:676.50px;">Main Website</span>
<span class="t" id="t105" style="top:1314.07px;font-size:13.5px;line-height:13.5px;font-weight:400;color:#303030;letter-spacing:-0.005px;left:803.00px;">Created</span>
<span class="t" id="t106" style="top:1314.07px;font-size:13.5px;line-height:13.5px;font-weight:400;color:#303030;letter-spacing:0.051px;left:908.00px;">$7.64</span>
<span class="t" id="t107" style="top:1314.07px;font-size:13.5px;line-height:13.5px;font-weight:400;color:#303030;letter-spacing:0.051px;left:1026.00px;">$7.64</span>
<span class="t" id="t108" style="top:1314.07px;font-size:13.5px;line-height:13.5px;font-weight:400;color:#303030;transform:scaleX(1.0574);transform-origin:0 50%;left:1096.00px;">No</span>
<span class="t" id="t109" style="top:1239.07px;font-size:13.5px;line-height:13.5px;font-weight:400;color:#303030;transform:scaleX(1.0517);transform-origin:0 50%;left:1227.30px;">#1.</span>
</body></html>
